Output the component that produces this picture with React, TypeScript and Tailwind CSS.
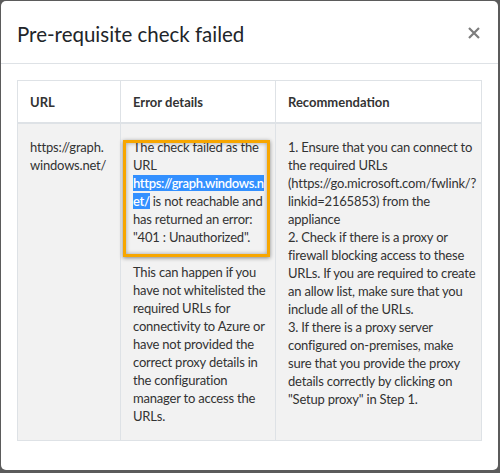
import React from "react";

const font = { fontFamily: "Lato, 'Noto Sans', sans-serif" };

export default function App() {
  return (
    <div
      className="w-[500px] h-[473px] bg-[#5b5b5b] pt-px pl-px pr-[2px] pb-[3px]"
      style={font}
    >
      <div className="h-full w-full bg-white rounded-[5px] flex flex-col">
        <div className="h-[63px] border-b border-[#dee2e6] flex items-center justify-between pl-4 pr-[18px]">
          <h1 className="text-[20.5px] leading-[26px] text-[#212529] pt-[3px]">
            Pre-requisite check failed
          </h1>
          <svg width="12" height="12" viewBox="0 0 12 12" className="mt-[2px]">
            <path
              d="M1 1 L11 11 M11 1 L1 11"
              stroke="#7d7d7d"
              strokeWidth="2.2"
              strokeLinecap="butt"
            />
          </svg>
        </div>
        <div className="p-4">
          <div className="border border-[#dee2e6] text-[13px] leading-[18px] tracking-[-0.2px] text-[#333]">
            <div className="grid grid-cols-[102px_155px_1fr] bg-white border-b-2 border-[#dee2e6] h-[43px] font-bold tracking-normal">
              <div className="pl-3 flex items-center">URL</div>
              <div className="pl-3 flex items-center border-l border-[#dee2e6]">
                Error details
              </div>
              <div className="pl-3 flex items-center border-l border-[#dee2e6]">
                Recommendation
              </div>
            </div>
            <div className="grid grid-cols-[102px_155px_1fr] bg-[#f2f2f2]">
              <div className="pl-3 pt-[14px] pb-[15px] whitespace-nowrap">
                https://graph.
                <br />
                windows.net/
              </div>
              <div className="relative pl-3 pt-[14px] pb-[15px] border-l border-[#dee2e6] whitespace-nowrap">
                <p>
                  The check failed as the
                  <br />
                  URL
                  <br />
                  <span className="bg-[#3390ff] text-white font-semibold tracking-[-0.35px]">
                    https://graph.windows.n
                  </span>
                  <br />
                  <span className="bg-[#3390ff] text-white font-semibold tracking-[-0.35px]">et/</span>{" "}
                  is not reachable and
                  <br />
                  has returned an error:
                  <br />
                  "401 : Unauthorized".
                </p>
                <p className="mt-[17px]">
                  This can happen if you
                  <br />
                  have not whitelisted the
                  <br />
                  required URLs for
                  <br />
                  connectivity to Azure or
                  <br />
                  have not provided the
                  <br />
                  correct proxy details in
                  <br />
                  the configuration
                  <br />
                  manager to access the
                  <br />
                  URLs.
                </p>
                <div className="absolute left-[2px] top-[16px] w-[147px] h-[117px] border-[3px] border-[#f7a600] shadow-[0_1px_4px_rgba(0,0,0,0.45),inset_0_0_4px_rgba(0,0,0,0.35)]" />
              </div>
              <div className="pl-3 pt-[14px] pb-[15px] border-l border-[#dee2e6] whitespace-nowrap">
                1. Ensure that you can connect to
                <br />
                the required URLs
                <br />
                (https://go.microsoft.com/fwlink/?
                <br />
                linkid=2165853) from the
                <br />
                appliance
                <br />
                2. Check if there is a proxy or
                <br />
                firewall blocking access to these
                <br />
                URLs. If you are required to create
                <br />
                an allow list, make sure that you
                <br />
                include all of the URLs.
                <br />
                3. If there is a proxy server
                <br />
                configured on-premises, make
                <br />
                sure that you provide the proxy
                <br />
                details correctly by clicking on
                <br />
                "Setup proxy" in Step 1.
              </div>
            </div>
          </div>
        </div>
      </div>
    </div>
  );
}
